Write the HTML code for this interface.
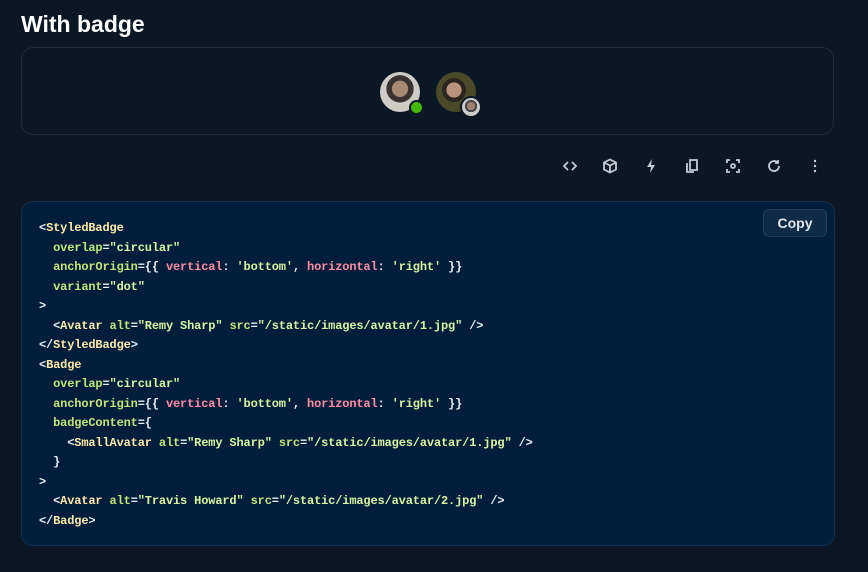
<!DOCTYPE html>
<html><head><style>
body{margin:0;background:#0b1725;width:868px;height:572px;overflow:hidden;font-family:"Liberation Sans",sans-serif;}
h2{position:absolute;left:21px;top:11px;margin:0;color:#fff;font-size:23px;font-weight:bold;}
.demo{position:absolute;left:21px;top:47px;width:813px;height:88px;border:1px solid #1c2a3a;border-radius:12px;box-sizing:border-box;}
.av{position:absolute;width:40px;height:40px;border-radius:50%;}
.tb{position:absolute;top:158px;}
.tb svg{position:absolute;width:16px;height:16px;fill:none;stroke:#c4ccd6;stroke-width:1.8;}
.code{position:absolute;left:21px;top:201px;width:814px;height:345px;background:#001e3c;border:1px solid #132f4c;border-radius:12px;box-sizing:border-box;}
pre{position:absolute;left:17px;top:17px;margin:0;font-family:"Liberation Mono",monospace;font-size:12px;font-weight:bold;line-height:19.5px;color:#e6edf3;letter-spacing:-0.15px;}
.t{color:#ffe9a8}.a{color:#c5e478}.s{color:#d9f5a0}.k{color:#ff8fa3}
.copy{position:absolute;right:7px;top:7px;width:64px;height:28px;border:1px solid #1f3d5c;background:#0e2a47;border-radius:6px;color:#e3e8ee;font-size:14px;font-weight:bold;text-align:center;line-height:26px;box-sizing:border-box;}
</style></head><body>
<h2>With badge</h2>
<div class="demo">
<div class="av" style="left:358px;top:24px;background:radial-gradient(circle at 50% 42%,#a88a75 0 26%,#3a3430 27% 44%,#cfcbc5 45%);"></div>
<div style="position:absolute;left:387px;top:52px;width:11px;height:11px;border-radius:50%;background:#44b700;border:2px solid #0b1725;"></div>
<div class="av" style="left:414px;top:24px;background:radial-gradient(circle at 45% 45%,#b8927a 0 24%,#2a2520 25% 38%,#4a4a2a 39%);"></div>
<div style="position:absolute;left:438px;top:48px;width:18px;height:18px;border-radius:50%;background:radial-gradient(circle at 50% 45%,#a08070 0 30%,#444 31% 45%,#ccc 46%);border:2px solid #0b1725;"></div>
</div>
<div class="tb">
<svg style="left:562px" viewBox="0 0 16 16"><path d="M6 4L2 8l4 4M10 4l4 4-4 4"/></svg>
<svg style="left:602px" viewBox="0 0 16 16"><path d="M8 1.5l6 3v7l-6 3-6-3v-7zM2 4.5l6 3 6-3M8 7.5v7"/></svg>
<svg style="left:643px" viewBox="0 0 16 16"><path d="M9 1L4 9h4l-1 6 5-8H8z" fill="#c4ccd6" stroke="none"/></svg>
<svg style="left:684px" viewBox="0 0 16 16"><path d="M6 2h7v10H6zM3 5v9h7"/></svg>
<svg style="left:725px" viewBox="0 0 16 16"><path d="M2 5V2h3M11 2h3v3M14 11v3h-3M5 14H2v-3"/><circle cx="8" cy="8" r="2"/></svg>
<svg style="left:766px" viewBox="0 0 16 16"><path d="M13 8a5 5 0 1 1-1.5-3.5M12 2v3h-3"/></svg>
<svg style="left:807px" viewBox="0 0 16 16"><path d="M8 3v.1M8 8v.1M8 13v.1" stroke-width="2.4" stroke-linecap="round"/></svg>
</div>
<div class="code">
<div class="copy">Copy</div>
<pre>&lt;<span class="t">StyledBadge</span>
  <span class="a">overlap</span>=<span class="s">"circular"</span>
  <span class="a">anchorOrigin</span>={{ <span class="k">vertical</span>: <span class="s">'bottom'</span>, <span class="k">horizontal</span>: <span class="s">'right'</span> }}
  <span class="a">variant</span>=<span class="s">"dot"</span>
&gt;
  &lt;<span class="t">Avatar</span> <span class="a">alt</span>=<span class="s">"Remy Sharp"</span> <span class="a">src</span>=<span class="s">"/static/images/avatar/1.jpg"</span> /&gt;
&lt;/<span class="t">StyledBadge</span>&gt;
&lt;<span class="t">Badge</span>
  <span class="a">overlap</span>=<span class="s">"circular"</span>
  <span class="a">anchorOrigin</span>={{ <span class="k">vertical</span>: <span class="s">'bottom'</span>, <span class="k">horizontal</span>: <span class="s">'right'</span> }}
  <span class="a">badgeContent</span>={
    &lt;<span class="t">SmallAvatar</span> <span class="a">alt</span>=<span class="s">"Remy Sharp"</span> <span class="a">src</span>=<span class="s">"/static/images/avatar/1.jpg"</span> /&gt;
  }
&gt;
  &lt;<span class="t">Avatar</span> <span class="a">alt</span>=<span class="s">"Travis Howard"</span> <span class="a">src</span>=<span class="s">"/static/images/avatar/2.jpg"</span> /&gt;
&lt;/<span class="t">Badge</span>&gt;</pre>
</div>
</body></html>
